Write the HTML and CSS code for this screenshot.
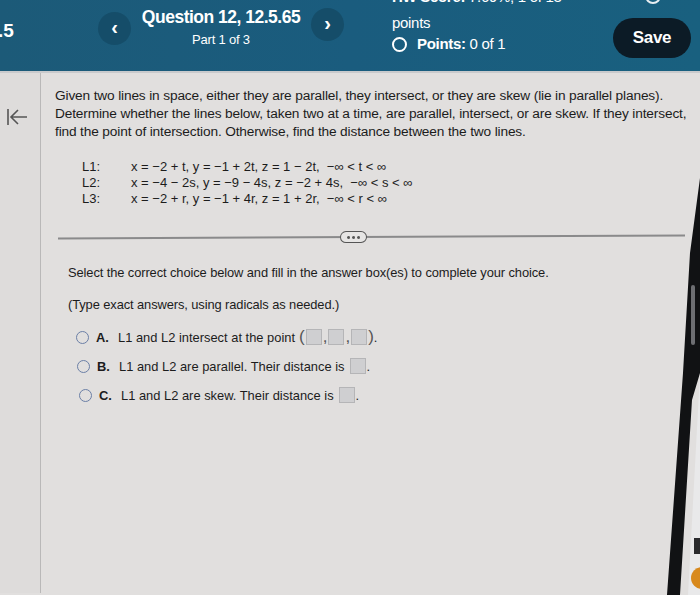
FILE: index.html
```html
<!DOCTYPE html>
<html>
<head>
<meta charset="utf-8">
<link rel="stylesheet" href="styles.css">
</head>
<body>
<div class="page">
  <header class="topbar">
    <div class="sect">.5</div>
    <div class="nav">
      <div class="circ"><span>&#8249;</span></div>
      <div class="qtitle">
        <div class="qname">Question 12, 12.5.65</div>
        <div class="qpart">Part 1 of 3</div>
      </div>
      <div class="circ next"><span>&#8250;</span></div>
    </div>
    <div class="score">
      <div class="hw"><b>HW Score:</b> 7.69%, 1 of 13</div>
      <div class="pts">points</div>
      <div class="pline"><span class="ring"></span><b>Points:</b>&nbsp;0 of 1</div>
    </div>
    <div class="gear"></div>
    <div class="save">Save</div>
  </header>
  <main class="body">
    <aside class="side">
      <svg class="back" width="22" height="20" viewBox="0 0 22 20"><path d="M2 2V18M21 10H6M12 3L5 10L12 17" fill="none" stroke="#555" stroke-width="1.6"/></svg>
    </aside>
    <section class="content">
      <p class="intro">Given two lines in space, either they are parallel, they intersect, or they are skew (lie in parallel planes). Determine whether the lines below, taken two at a time, are parallel, intersect, or are skew. If they intersect, find the point of intersection. Otherwise, find the distance between the two lines.</p>
      <div class="eqs">
        <div class="eq"><span class="lb">L1:</span><span>x = &minus;2 + t, y = &minus;1 + 2t, z = 1 &minus; 2t, &nbsp;&minus;&infin; &lt; t &lt; &infin;</span></div>
        <div class="eq"><span class="lb">L2:</span><span>x = &minus;4 &minus; 2s, y = &minus;9 &minus; 4s, z = &minus;2 + 4s, &nbsp;&minus;&infin; &lt; s &lt; &infin;</span></div>
        <div class="eq"><span class="lb">L3:</span><span>x = &minus;2 + r, y = &minus;1 + 4r, z = 1 + 2r, &nbsp;&minus;&infin; &lt; r &lt; &infin;</span></div>
      </div>
      <div class="divider"><span class="pill"><i></i><i></i><i></i></span></div>
      <div class="answer">
        <p class="inst">Select the correct choice below and fill in the answer box(es) to complete your choice.</p>
        <p class="inst">(Type exact answers, using radicals as needed.)</p>
        <div class="opt"><span class="radio"></span><b>A.</b><span class="txt">L1 and L2 intersect at the point</span><span class="paren">(<span class="box"></span>,<span class="box"></span>,<span class="box"></span>)</span>.</div>
        <div class="opt"><span class="radio"></span><b>B.</b><span class="txt">L1 and L2 are parallel. Their distance is</span><span class="box"></span>.</div>
        <div class="opt"><span class="radio"></span><b>C.</b><span class="txt">L1 and L2 are skew. Their distance is</span><span class="box"></span>.</div>
      </div>
    </section>
  </main>
  <svg class="edge" width="50" height="522" viewBox="0 0 50 522">
    <polygon points="50,100 50,522 38,522 50,300" fill="#e9e9ea"/>
    <polygon points="50,105 50,300 42,327 30,522 17,522 33,300 40,180" fill="#111214"/>
    <rect x="41" y="212" width="4" height="60" rx="2" fill="#6d6e72"/>
    <circle cx="52" cy="505" r="11" fill="#d8891c"/>
    <rect x="44" y="465" width="6" height="16" fill="#2a2a2c"/>
  </svg>
</div>
</body>
</html>
```
FILE: styles.css
```css
* { box-sizing: border-box; }
html, body { margin: 0; padding: 0; }
body { width: 700px; height: 595px; overflow: hidden; font-family: "Liberation Sans", Arial, sans-serif; background: #e1dfde; }
.page { position: relative; width: 700px; height: 595px; }
.topbar { height: 73px; background: linear-gradient(90deg, #1c5a78 0%, #1a5c7e 50%, #19607f 100%); color: #fff; display: flex; position: relative; border-bottom: 2px solid #c9cacc; }
.sect { font-weight: bold; font-size: 19px; padding: 20px 0 0 0; width: 100px; margin-left: -2px; }
.nav { display: flex; align-items: flex-start; }
.circ { width: 33px; height: 33px; border-radius: 50%; background: #154d69; margin-top: 12px; display: flex; align-items: center; justify-content: center; font-size: 20px; font-weight: bold; line-height: 1; }
.circ span { margin-top: -3px; }
.next { margin-top: 8px; }
.qtitle { width: 180px; text-align: center; padding-top: 7px; }
.qname { font-weight: bold; font-size: 17.5px; letter-spacing: -0.5px; }
.qpart { font-size: 13px; margin-top: 4px; letter-spacing: -0.2px; }
.score { margin-left: 48px; font-size: 15px; letter-spacing: -0.3px; }
.hw { margin-top: -12px; line-height: 18px; }
.pts { line-height: 18px; margin-top: 8px; }
.pline { display: flex; align-items: center; margin-top: 3px; line-height: 18px; }
.ring { width: 15px; height: 15px; border: 2.5px solid #fff; border-radius: 50%; margin-right: 10px; }
.gear { position: absolute; left: 645px; top: -12px; width: 16px; height: 16px; border: 2px solid #e8eef2; border-radius: 50%; }
.save { position: absolute; left: 613px; top: 18px; width: 78px; height: 40px; border-radius: 20px; background: #0c1b26; font-weight: bold; font-size: 17px; display: flex; align-items: center; justify-content: center; letter-spacing: -0.3px; }
.body { display: flex; height: 520px; }
.side { width: 41px; flex-shrink: 0; border-right: 1px solid #b9b8b8; padding: 34px 0 0 6px; background: #dedcdb; }
.content { flex: 1; min-width: 0; padding: 14px 10px 0 14px; color: #1c1c1c; }
.intro { margin: 0; font-size: 13.7px; line-height: 18px; letter-spacing: -0.15px; width: 632px; }
.eqs { margin: 18px 0 0 27px; font-size: 13px; line-height: 16px; }
.eq { display: flex; }
.lb { width: 49px; }
.divider { margin: 29px 5px 0 3px; height: 2px; background: #8a8a8b; position: relative; transform: rotate(-0.28deg); }
.pill { position: absolute; left: 282px; top: -5px; width: 27px; height: 12px; border: 1.5px solid #555; border-radius: 6px; background: #e6e5e4; display: flex; justify-content: center; align-items: center; gap: 2px; }
.pill i { width: 3px; height: 3px; background: #555; border-radius: 50%; }
.answer { padding: 26px 0 0 13px; font-size: 12.9px; }
.inst { margin: 0 0 15px 0; line-height: 17px; letter-spacing: -0.1px; }
.opt { display: flex; align-items: center; height: 18px; margin: 0 0 11px 8px; }
.opt:nth-child(4) { margin-left: 9px; }
.opt:nth-child(5) { margin-left: 11px; }
.radio { width: 13px; height: 13px; border: 1.6px solid #6b7fa6; border-radius: 50%; margin-right: 7px; }
.opt b { width: 22px; font-size: 12.9px; }
.txt { margin-right: 4px; }
.paren { display: flex; align-items: center; font-size: 17px; color: #555; }
.box { display: inline-block; width: 16px; height: 16px; background: #cfcfd1; border: 1px solid #b5b5b7; margin: 0 1px; }
.edge { position: absolute; left: 650px; top: 73px; }
```
